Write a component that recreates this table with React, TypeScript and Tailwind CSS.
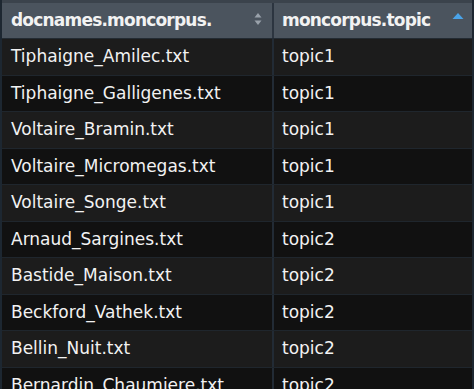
const rows = [
  ["Tiphaigne_Amilec.txt", "topic1"],
  ["Tiphaigne_Galligenes.txt", "topic1"],
  ["Voltaire_Bramin.txt", "topic1"],
  ["Voltaire_Micromegas.txt", "topic1"],
  ["Voltaire_Songe.txt", "topic1"],
  ["Arnaud_Sargines.txt", "topic2"],
  ["Bastide_Maison.txt", "topic2"],
  ["Beckford_Vathek.txt", "topic2"],
  ["Bellin_Nuit.txt", "topic2"],
  ["Bernardin_Chaumiere.txt", "topic2"],
];

export default function App() {
  return (
    <div
      className="w-[474px] h-[389px] overflow-hidden bg-[#111111] border-l-2 border-r-2 border-[#1d2731] text-[17px] text-[#f2f2f2] antialiased"
      style={{ fontFamily: '"DejaVu Sans", Verdana, sans-serif' }}
    >
      {/* header */}
      <div className="flex h-[39px] bg-[#4b545e] border-t-[3px] border-[#3b434c] border-b border-b-[#232b33]">
        <div className="w-[272px] flex items-center justify-between pl-[9px] pr-[10px] border-r-2 border-[#2c3540]">
          <span className="font-bold tracking-[-0.8px]">docnames.moncorpus.</span>
          <svg width="8" height="14" viewBox="0 0 8 14" className="mb-[4px]">
            <path d="M4 1 L7.5 5.5 L0.5 5.5 Z" fill="#9aa2ab" />
            <path d="M4 13 L7.5 8.5 L0.5 8.5 Z" fill="#9aa2ab" />
          </svg>
        </div>
        <div className="flex-1 flex items-center justify-between pl-[8px] pr-[8px]">
          <span className="font-bold tracking-[-0.8px]">moncorpus.topic</span>
          <svg width="12" height="8" viewBox="0 0 12 8" className="mb-[10px]">
            <path d="M6 1 L11.5 7 L0.5 7 Z" fill="#4aa3e8" />
          </svg>
        </div>
      </div>

      {/* body */}
      {rows.map(([doc, topic], i) => (
        <div
          key={doc}
          className={`flex h-[36.5px] border-b border-[#1f262d] ${i % 2 === 0 ? "bg-[#1c1c1c]" : "bg-[#111111]"}`}
        >
          <div className="w-[272px] flex items-center pl-[9px] border-r-2 border-[#222b35]">
            {doc}
          </div>
          <div className="flex-1 flex items-center pl-[8px]">{topic}</div>
        </div>
      ))}
    </div>
  );
}
